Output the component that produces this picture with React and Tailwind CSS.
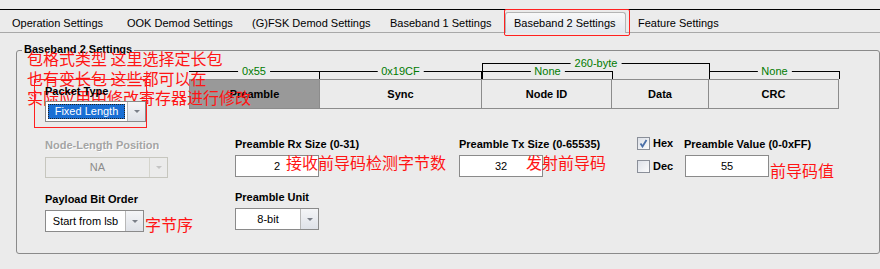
import React from "react";

/* ---------- HELPERS ---------- */

const tabs = [
  { label: "Operation Settings", w: "w-[115px]" },
  { label: "OOK Demod Settings", w: "w-[125px]" },
  { label: "(G)FSK Demod Settings", w: "w-[138px]" },
  { label: "Baseband 1 Settings", w: "w-[125px]" },
  { label: "Baseband 2 Settings", w: "w-[123px]", active: true },
  { label: "Feature Settings", w: "w-[120px]" },
];

const Note = ({ children, className = "" }) => (
  <span
    className={`absolute whitespace-nowrap text-[16px] leading-[16px] text-[#ff1414] font-['Noto_Sans_CJK_SC',sans-serif] ${className}`}
  >
    {children}
  </span>
);

const Arrow = ({ disabled }) => (
  <div
    className={`flex w-[18px] shrink-0 items-center justify-center border-l ${
      disabled ? "border-[#d4d4cc] bg-[#ebebeb]" : "border-[#b8b8b8] bg-gradient-to-b from-[#f4f5f7] to-[#dfe2e8]"
    }`}
  >
    <div
      className={`h-0 w-0 border-x-[3px] border-t-[3px] border-x-transparent ${
        disabled ? "border-t-[#c4c4c4]" : "border-t-[#7a7f88]"
      }`}
    />
  </div>
);

const Combo = ({ value, w, h = "h-[22px]", disabled, children }) => (
  <div
    className={`relative flex ${w} ${h} border ${
      disabled ? "border-[#c6c6be] bg-[#ebebeb]" : "border-[#8a8a8a] bg-white"
    }`}
  >
    <div
      className={`flex flex-1 items-center justify-center whitespace-nowrap text-[11px] ${
        disabled ? "text-[#8c8c8c]" : "text-black"
      }`}
    >
      {value}
    </div>
    <Arrow disabled={disabled} />
    {children}
  </div>
);

const Field = ({ value, children }) => (
  <div className="relative flex h-[22px] w-[84px] items-center justify-center border border-[#8a8a8a] bg-white text-[11px]">
    {value}
    {children}
  </div>
);

const Label = ({ children, className = "" }) => (
  <div className={`whitespace-nowrap text-[11px] font-bold leading-[13px] ${className}`}>
    {children}
  </div>
);

const Check = ({ checked, label, className = "" }) => (
  <div className={`flex items-center gap-[3px] ${className}`}>
    <div className="flex h-[13px] w-[13px] items-center justify-center border border-[#8a8f99] bg-gradient-to-br from-[#dde1e8] to-[#fbfbfc]">
      {checked && (
        <svg width="9" height="9" viewBox="0 0 9 9">
          <path d="M1.5 4.5 L3.5 7.5 L7.5 1" fill="none" stroke="#4a6fa8" strokeWidth="1.8" />
        </svg>
      )}
    </div>
    <span className="text-[11px] font-bold leading-[13px]">{label}</span>
  </div>
);

/* packet diagram bracket: top line + right tick, label sits on the line */
const Bracket = ({ label, w, h = "h-[8px]", left, children }) => (
  <div
    className={`relative flex items-end ${w} ${h} border-t border-r border-black ${
      left ? "border-l" : ""
    }`}
  >
    <span className="absolute -top-[8px] left-1/2 -translate-x-1/2 bg-[#ebebeb] px-[4px] text-[11px] leading-[14px] text-[#007a00]">
      {label}
    </span>
    {children}
  </div>
);

const Cell = ({ label, w, dark }) => (
  <div
    className={`flex h-[30px] items-center justify-center border-y border-r border-[#8c8c8c] text-[11px] font-bold text-black ${w} ${
      dark ? "border-l bg-[#999999]" : ""
    }`}
  >
    {label}
  </div>
);

/* ---------- MAIN ---------- */

export default function App() {
  return (
    <div className="h-[269px] w-[880px] overflow-hidden bg-[#ebebeb] font-['Liberation_Sans',Arial,sans-serif] text-black">
      <div className="h-[9px]" />

      {/* TABS */}
      <div className="flex h-[24px] border-y border-t-black border-b-[#a8a8a8]">
        {tabs.map((t) =>
          t.active ? (
            <div key={t.label} className={`relative ${t.w} h-[23px]`}>
              <div className="mt-[2px] ml-[2px] flex h-[21px] w-[121px] items-start rounded-t-[3px] border border-b-0 border-[#b4b4b4] bg-gradient-to-b from-[#f8f8f8] to-[#e2e7ee] pl-[8px] pt-[4px] text-[11px] leading-[13px]">
                {t.label}
              </div>
              <div className="absolute -top-[1px] left-[1px] h-[27px] w-[126px] rounded-[2px] border border-[#ff2020]" />
            </div>
          ) : (
            <div key={t.label} className={`${t.w} pl-[12px] pt-[7px] text-[11px] leading-[13px]`}>
              {t.label}
            </div>
          )
        )}
      </div>

      {/* GROUP */}
      <div className="relative mt-[17px] ml-[16px] h-[204px] w-[864px] rounded-[3px] border border-[#8a8a8a]">
        <span className="absolute -top-[8px] left-[5px] bg-[#ebebeb] px-[2px] text-[11px] font-bold leading-[13px]">
          Baseband 2 Settings
        </span>

        <Note className="left-[10px] top-[-2px] leading-[19.5px]">
          包格式类型 这里选择定长包
          <br />
          也有变长包 这些都可以在
          <br />
          实际应用中修改寄存器进行修改
        </Note>

        {/* ROW A */}
        <div className="flex h-[77px]">
          <div className="relative w-[172px] pl-[28px]">
            <Label className="relative mt-[34px]">Packet Type</Label>
            <div className="relative mt-[3px] flex h-[21px] w-[101px] border border-[#8a8a8a] bg-white">
              <div className="flex min-w-0 flex-1 items-center p-[2px]">
                <div className="flex h-full w-full items-center justify-center whitespace-nowrap border border-dotted border-[#222] bg-[#1a6fd4] text-[11px] leading-[13px] text-white">
                  Fixed Length
                </div>
              </div>
              <Arrow />
            </div>
            <div className="absolute left-[17px] top-[28px] h-[49px] w-[113px] border border-[#ff2020]" />
          </div>

          <div className="pt-[12px]">
            <div className="flex h-[16px] items-end">
              <Bracket label="0x55" w="w-[131px]" />
              <Bracket label="0x19CF" w="w-[162px]" />
              <Bracket label="260-byte" w="w-[228px]" h="h-[16px]" left>
                <Bracket label="None" w="w-[130px]" />
              </Bracket>
              <Bracket label="None" w="w-[130px]" />
            </div>
            <div className="flex">
              <Cell label="Preamble" w="w-[131px]" dark />
              <Cell label="Sync" w="w-[162px]" />
              <Cell label="Node ID" w="w-[130px]" />
              <Cell label="Data" w="w-[97px]" />
              <Cell label="CRC" w="w-[130px]" />
            </div>
          </div>
        </div>

        {/* ROW B */}
        <div className="flex pl-[28px]">
          <div className="w-[190px]">
            <Label className="mt-[11px] text-[#a4a4a4] [text-shadow:1px_1px_0_#ffffff]">
              Node-Length Position
            </Label>
            <div className="mt-[5px]">
              <Combo value="NA" w="w-[123px]" h="h-[21px]" disabled />
            </div>
            <Label className="mt-[15px]">Payload Bit Order</Label>
            <div className="mt-[4px]">
              <Combo value="Start from lsb" w="w-[99px]">
                <Note className="left-[99px] top-[5px]">字节序</Note>
              </Combo>
            </div>
          </div>

          <div className="w-[224px]">
            <Label className="mt-[10px]">Preamble Rx Size (0-31)</Label>
            <div className="mt-[4px]">
              <Field value="2">
                <Note className="left-[50px] top-[-2px]">接收前导码检测字节数</Note>
              </Field>
            </div>
            <Label className="mt-[14px]">Preamble Unit</Label>
            <div className="mt-[4px]">
              <Combo value="8-bit" w="w-[84px]" />
            </div>
          </div>

          <div className="w-[178px]">
            <Label className="mt-[10px]">Preamble Tx Size (0-65535)</Label>
            <div className="mt-[4px]">
              <Field value="32">
                <Note className="left-[66px] top-[-2px]">发射前导码</Note>
              </Field>
            </div>
          </div>

          <div className="w-[47px]">
            <Check checked label="Hex" className="mt-[9px]" />
            <Check label="Dec" className="mt-[10px]" />
          </div>

          <div>
            <Label className="mt-[10px]">Preamble Value (0-0xFF)</Label>
            <div className="mt-[4px] ml-[1px]">
              <Field value="55">
                <Note className="left-[84px] top-[6px]">前导码值</Note>
              </Field>
            </div>
          </div>
        </div>
      </div>
    </div>
  );
}
